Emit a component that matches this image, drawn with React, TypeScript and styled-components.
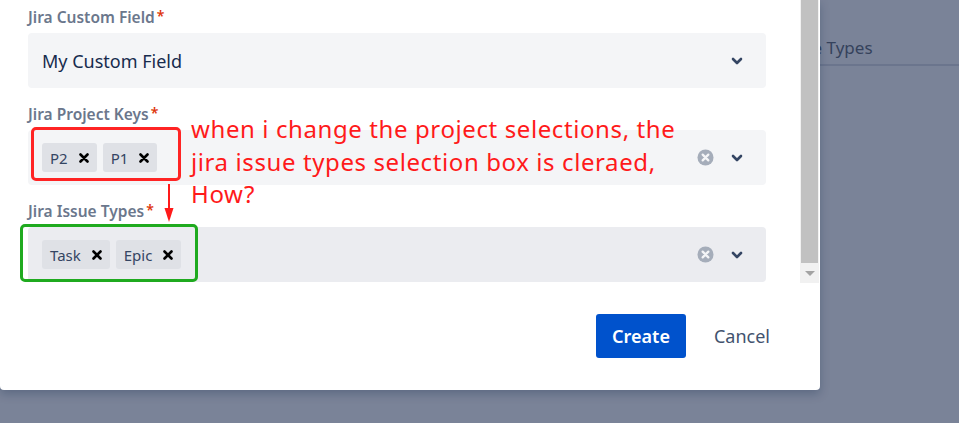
import React from "react";
import styled, { createGlobalStyle } from "styled-components";

const GlobalStyle = createGlobalStyle`
  html, body {
    margin: 0;
    padding: 0;
    background: #7a8398;
    font-family: "Noto Sans", "Open Sans", sans-serif;
  }
`;

type Tag = { label: string };

const fields: { label: string; value?: string; tags?: Tag[]; clear?: boolean; hovered?: boolean }[] = [
  { label: "Jira Custom Field", value: "My Custom Field" },
  { label: "Jira Project Keys", tags: [{ label: "P2" }, { label: "P1" }], clear: true },
  { label: "Jira Issue Types", tags: [{ label: "Task" }, { label: "Epic" }], clear: true, hovered: true },
];

export default function App() {
  return (
    <>
      <GlobalStyle />
      <Screen>
        <Modal>
          <Body>
            <Form>
              {fields.map((f) => (
                <Field key={f.label}>
                  <Label>
                    {f.label}
                    <Required>*</Required>
                  </Label>
                  <SelectBox $hovered={f.hovered}>
                    <Values>
                      {f.value && <Value>{f.value}</Value>}
                      {f.tags?.map((t) => (
                        <TagChip key={t.label}>
                          <TagText>{t.label}</TagText>
                          <TagRemove>
                            <svg width="10" height="10" viewBox="0 0 10 10">
                              <path d="M1.5 1.5 L8.5 8.5 M8.5 1.5 L1.5 8.5" stroke="#000000" strokeWidth="2.6" strokeLinecap="round" />
                            </svg>
                          </TagRemove>
                        </TagChip>
                      ))}
                    </Values>
                    <Indicators>
                      {f.clear && (
                        <IconSlot>
                          <svg width="17" height="17" viewBox="0 0 18 18">
                            <circle cx="9" cy="9" r="8.5" fill="#a5adba" />
                            <path d="M6 6 L12 12 M12 6 L6 12" stroke="#f4f5f7" strokeWidth="2.4" strokeLinecap="round" />
                          </svg>
                        </IconSlot>
                      )}
                      <IconSlot>
                        <svg width="14" height="14" viewBox="0 0 14 14">
                          <path d="M3 5 L7 9 L11 5" fill="none" stroke="#344563" strokeWidth="2.6" strokeLinecap="round" strokeLinejoin="round" />
                        </svg>
                      </IconSlot>
                    </Indicators>
                  </SelectBox>
                </Field>
              ))}
            </Form>
            <Scrollbar>
              <Thumb />
              <ScrollArrow />
            </Scrollbar>

            <RedBox />
            <GreenBox />
            <Arrow>
              <svg width="14" height="40" viewBox="0 0 14 40">
                <line x1="7" y1="0" x2="7" y2="28" stroke="#ff1a1a" strokeWidth="2" />
                <path d="M2.5 24 L11.5 24 L7 38 Z" fill="#ff1a1a" />
              </svg>
            </Arrow>
            <Note>
              when i change the project selections, the
              <br />
              jira issue types selection box is cleraed,
              <br />
              How?
            </Note>
          </Body>
          <Footer>
            <PrimaryButton>Create</PrimaryButton>
            <SubtleButton>Cancel</SubtleButton>
          </Footer>
        </Modal>
        <Backdrop>
          <BackTab>Issue Types</BackTab>
          <BackRule />
        </Backdrop>
      </Screen>
    </>
  );
}

const Screen = styled.div`
  display: flex;
  align-items: flex-start;
  width: 959px;
  height: 423px;
  overflow: hidden;
`;

const Modal = styled.div`
  position: relative;
  z-index: 1;
  flex: 0 0 820px;
  background: #ffffff;
  border-radius: 0 0 4px 4px;
  box-shadow: 0 4px 10px rgba(9, 30, 66, 0.25);
`;

const Body = styled.div`
  position: relative;
  display: flex;
  height: 283px;
`;

const Form = styled.div`
  flex: 1;
  padding: 7px 34px 0 28px;
  display: flex;
  flex-direction: column;
  gap: 16px;
`;

const Field = styled.div`
  display: flex;
  flex-direction: column;
  gap: 5px;
`;

const Label = styled.div`
  height: 21px;
  font-size: 15.5px;
  line-height: 21px;
  font-weight: 600;
  color: #6b778c;
`;

const Required = styled.span`
  position: relative;
  top: -2px;
  color: #de350b;
  margin-left: 2px;
  font-size: 14px;
`;

const SelectBox = styled.div<{ $hovered?: boolean }>`
  display: flex;
  align-items: center;
  height: 55px;
  box-sizing: border-box;
  padding: 0 20px 0 14px;
  border-radius: 4px;
  background: ${(p) => (p.$hovered ? "#ebecf0" : "#f4f5f7")};
`;

const Values = styled.div`
  flex: 1;
  display: flex;
  align-items: center;
  gap: 6px;
`;

const Value = styled.span`
  font-size: 18px;
  color: #172b4d;
`;

const TagChip = styled.div`
  display: flex;
  align-items: center;
  height: 29px;
  padding: 0 8px;
  gap: 11px;
  border-radius: 3px;
  background: #dfe1e6;
`;

const TagText = styled.span`
  font-size: 15px;
  color: #344563;
`;

const TagRemove = styled.span`
  display: flex;
  align-items: center;
`;

const Indicators = styled.div`
  display: flex;
  align-items: center;
  gap: 14px;
`;

const IconSlot = styled.span`
  display: flex;
  align-items: center;
  justify-content: center;
  width: 18px;
  height: 18px;
`;

const Scrollbar = styled.div`
  flex: 0 0 19px;
  margin-right: 1px;
  display: flex;
  flex-direction: column;
  background: #f1f1f1;
`;

const Thumb = styled.div`
  flex: 1;
  margin: 0 1px;
  background: #c1c1c1;
`;

const ScrollArrow = styled.div`
  height: 20px;
  display: flex;
  align-items: center;
  justify-content: center;
  &::after {
    content: "";
    border-left: 5px solid transparent;
    border-right: 5px solid transparent;
    border-top: 5px solid #a3a3a3;
  }
`;

const RedBox = styled.div`
  position: absolute;
  left: 31px;
  top: 127px;
  width: 150px;
  height: 54px;
  box-sizing: border-box;
  border: 3px solid #ff2424;
  border-radius: 5px;
`;

const GreenBox = styled.div`
  position: absolute;
  left: 20px;
  top: 224px;
  width: 178px;
  height: 58px;
  box-sizing: border-box;
  border: 3px solid #1faa1f;
  border-radius: 5px;
`;

const Arrow = styled.div`
  position: absolute;
  left: 162px;
  top: 184px;
  line-height: 0;
`;

const Note = styled.div`
  position: absolute;
  left: 191px;
  top: 113px;
  font-family: "Noto Sans", sans-serif;
  font-size: 24px;
  letter-spacing: 0.6px;
  line-height: 32.5px;
  color: #ff1a1a;
  white-space: nowrap;
`;

const Footer = styled.div`
  display: flex;
  justify-content: flex-end;
  gap: 14px;
  padding: 31px 36px 32px 0;
`;

const PrimaryButton = styled.button`
  height: 44px;
  padding: 0 16px;
  border: none;
  border-radius: 3px;
  background: #0052cc;
  color: #ffffff;
  font-family: "Noto Sans", sans-serif;
  font-size: 18px;
  font-weight: 600;
`;

const SubtleButton = styled.button`
  height: 44px;
  padding: 0 14px;
  border: none;
  background: transparent;
  color: #42526e;
  font-family: "Noto Sans", sans-serif;
  font-size: 18px;
`;

const Backdrop = styled.div`
  flex: 1;
  margin-left: -60px;
  padding-top: 36px;
`;

const BackTab = styled.div`
  font-size: 17px;
  line-height: 24px;
  color: #35425c;
  padding-left: 20px;
`;

const BackRule = styled.div`
  margin-top: 4px;
  height: 2px;
  background: #6b758d;
`;
